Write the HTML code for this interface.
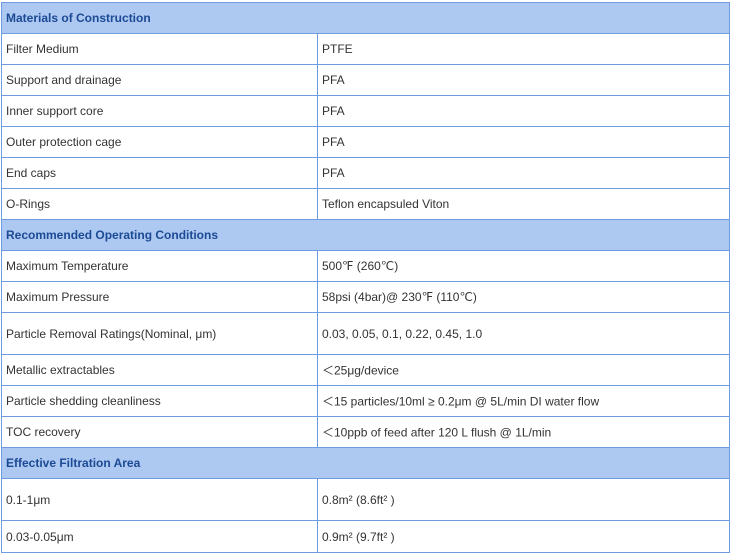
<!DOCTYPE html>
<html><head><style>
body{margin:0;background:#fff;font-family:"Liberation Sans",Arial,sans-serif;font-size:12px;color:#333;}
.t{position:absolute;left:1px;top:2px;width:729px;}
.r{position:absolute;left:0;width:729px;border:1px solid #6f9ce0;box-sizing:border-box;}
.h{background:#adc8f1;color:#1c4a94;font-weight:bold;}
.r span{position:absolute;top:50%;transform:translateY(-50%);left:4px;white-space:nowrap;}
.r span.v{left:320px;}
.r .d{position:absolute;left:315px;top:-1px;bottom:-1px;border-left:1px solid #6f9ce0;}
</style></head><body>
<div class="t">
<div class="r h" style="top:0;height:32px"><span>Materials of Construction</span></div>
<div class="r" style="top:31px;height:32px"><span>Filter Medium</span><i class="d"></i><span class="v">PTFE</span></div>
<div class="r" style="top:62px;height:32px"><span>Support and drainage</span><i class="d"></i><span class="v">PFA</span></div>
<div class="r" style="top:93px;height:32px"><span>Inner support core</span><i class="d"></i><span class="v">PFA</span></div>
<div class="r" style="top:124px;height:32px"><span>Outer protection cage</span><i class="d"></i><span class="v">PFA</span></div>
<div class="r" style="top:155px;height:32px"><span>End caps</span><i class="d"></i><span class="v">PFA</span></div>
<div class="r" style="top:186px;height:32px"><span>O-Rings</span><i class="d"></i><span class="v">Teflon encapsuled Viton</span></div>
<div class="r h" style="top:217px;height:32px"><span>Recommended Operating Conditions</span></div>
<div class="r" style="top:248px;height:32px"><span>Maximum Temperature</span><i class="d"></i><span class="v">500℉ (260℃)</span></div>
<div class="r" style="top:279px;height:32px"><span>Maximum Pressure</span><i class="d"></i><span class="v">58psi (4bar)@ 230℉ (110℃)</span></div>
<div class="r" style="top:310px;height:43px"><span>Particle Removal Ratings(Nominal, μm)</span><i class="d"></i><span class="v">0.03, 0.05, 0.1, 0.22, 0.45, 1.0</span></div>
<div class="r" style="top:352px;height:32px"><span>Metallic extractables</span><i class="d"></i><span class="v">＜25μg/device</span></div>
<div class="r" style="top:383px;height:32px"><span>Particle shedding cleanliness</span><i class="d"></i><span class="v">＜15 particles/10ml ≥ 0.2μm @ 5L/min DI water flow</span></div>
<div class="r" style="top:414px;height:32px"><span>TOC recovery</span><i class="d"></i><span class="v">＜10ppb of feed after 120 L flush @ 1L/min</span></div>
<div class="r h" style="top:445px;height:32px"><span>Effective Filtration Area</span></div>
<div class="r" style="top:476px;height:43px"><span>0.1-1μm</span><i class="d"></i><span class="v">0.8m² (8.6ft² )</span></div>
<div class="r" style="top:518px;height:33px"><span>0.03-0.05μm</span><i class="d"></i><span class="v">0.9m² (9.7ft² )</span></div>
</div>
</body></html>
